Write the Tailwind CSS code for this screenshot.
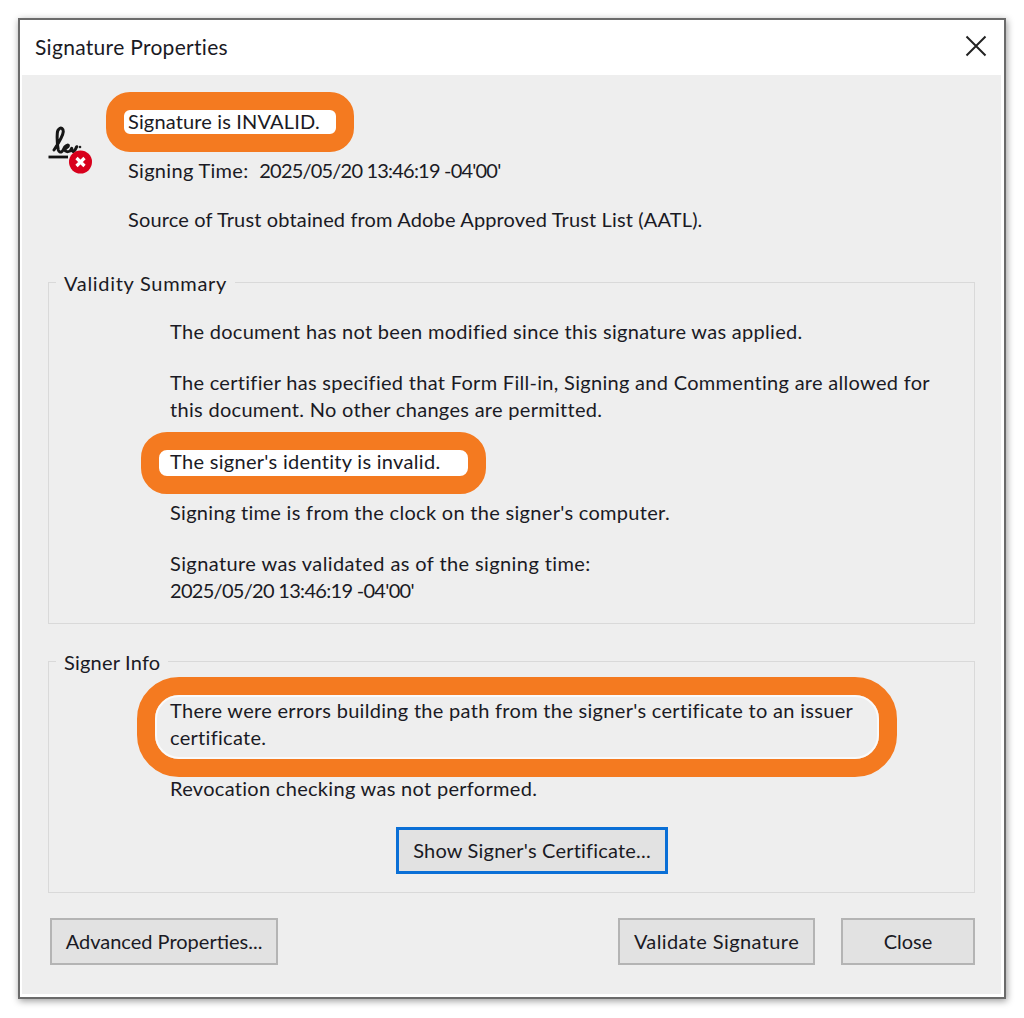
<!DOCTYPE html>
<html><head><meta charset="utf-8"><script src="https://cdn.jsdelivr.net/npm/@tailwindcss/browser@4"></script><title>Signature Properties</title></head>
<body class="bg-white w-[1024px] h-[1018px] overflow-hidden font-['Lato','Liberation_Sans',sans-serif] text-[20px] leading-[27px] tracking-[0.3px] text-[#1a1a24]">
<div class="relative ml-[18px] mt-[18px] w-[988px] h-[981px] border-2 border-[#6b6b6b] bg-white flex flex-col shadow-[1px_2px_7px_rgba(0,0,0,0.4)]">
  <div class="absolute left-[86px] top-[72px] w-[248px] h-[60px] border-[18px] border-[#f47a20] rounded-[24px] bg-white"></div>
  <div class="absolute left-[121px] top-[412px] w-[345px] h-[62px] border-[18px] border-[#f47a20] rounded-[26px] bg-white"></div>
  <div class="absolute left-[117px] top-[657px] w-[760px] h-[100px] border-[18px] border-[#f47a20] rounded-[42px]"></div>
  <div class="absolute left-[135px] top-[675px] w-[724px] h-[64px] border-2 border-white/70 rounded-[24px]"></div>
  <header class="relative h-[55px] flex items-center justify-between pl-[15px] pr-[17px] shrink-0">
    <span class="text-[21px] -mt-[2px]">Signature Properties</span>
    <svg class="-mt-[4px]" width="22" height="22" viewBox="0 0 22 22" fill="none" stroke="#222" stroke-width="2"><path d="M1.500 1.500 20.500 20.500M20.500 1.500 1.500 20.500"/></svg>
  </header>
  <main class="flex-1 flex flex-col ml-[2px] mr-[3px] mb-[3px] px-[26px] bg-[#eeeeee]">
    <section class="relative pl-[80px] pt-[33px] h-[207px] shrink-0">
      <svg class="absolute left-[0px] top-[51px]" width="46" height="50" viewBox="0 0 46 50" fill="none">
        <path d="M0.500 31H20" stroke="#111" stroke-width="2.800"/>
        <path d="M6 24C10 18 15 10 15.300 5.700C15.300 2.500 13 1.500 12 2.300C10 3.500 9.300 5 9.300 7.300C9 12 9.500 20 10.300 24C10.800 26 12.500 26.500 13.700 25.700C15 25 16 22 17 20.700C18.500 19 20.800 18.500 20.300 20C19.800 21.500 17 22 17 24C17.200 26 20 26 22 25C23 24 23.300 23 23.700 22.300C24 24 24.500 25.700 25.300 25.700C26.500 25.700 27.500 23 28.700 20.700" stroke="#161616" stroke-width="3" stroke-linecap="round" stroke-linejoin="round"/>
        <circle cx="32" cy="21" r="1.300" fill="#222"/>
        <circle cx="32.500" cy="36" r="11.500" fill="#d8001c"/>
        <path d="M28.500 32 36.500 40M36.500 32 28.500 40" stroke="#fff" stroke-width="3.200"/>
      </svg>
      <p class="tracking-[0.15px]">Signature is INVALID.</p>
      <p class="mt-[22px]">Signing Time:&nbsp;&nbsp;<span class="tracking-[-0.8px]">2025/05/20 13:46:19 -04'00'</span></p>
      <p class="mt-[22px] tracking-[0.145px]">Source of Trust obtained from Adobe Approved Trust List (AATL).</p>
    </section>
    <section class="relative h-[342px] border border-[#d9d9d9] pl-[121px] pr-[40px] pt-[35px] shrink-0">
      <h2 class="absolute left-[7px] top-[-13px] bg-[#eeeeee] px-[8px] tracking-[0.7px]">Validity Summary</h2>
      <p>The document has not been modified since this signature was applied.</p>
      <p class="mt-[24px]">The certifier has specified that Form Fill-in, Signing and Commenting are allowed for this document. No other changes are permitted.</p>
      <p class="mt-[25px]">The signer's identity is invalid.</p>
      <p class="mt-[24px]">Signing time is from the clock on the signer's computer.</p>
      <p class="mt-[24px] tracking-[0.4px]">Signature was validated as of the signing time:<br><span class="tracking-[-0.7px]">2025/05/20 13:46:19 -04'00'</span></p>
    </section>
    <section class="relative mt-[37px] h-[232px] border border-[#d9d9d9] pl-[121px] pr-[70px] pt-[35px] shrink-0">
      <h2 class="absolute left-[7px] top-[-13px] bg-[#eeeeee] px-[8px] tracking-[0.2px]">Signer Info</h2>
      <p>There were errors building the path from the signer's certificate to an issuer certificate.</p>
      <p class="mt-[24px]">Revocation checking was not performed.</p>
      <div class="flex justify-center mt-[25px] ml-[-121px] mr-[-70px]">
        <button class="w-[272px] h-[47px] ml-[41px] border-3 border-[#0a6fd6] bg-[#e2e2e2] tracking-[0.2px]">Show Signer's Certificate...</button>
      </div>
    </section>
    <footer class="flex justify-between mt-[25px] pl-[2px] pr-0">
      <button class="w-[228px] h-[47px] border-2 border-[#b4b4b4] bg-[#e2e2e2] tracking-normal">Advanced Properties...</button>
      <div class="flex gap-[26px]">
        <button class="w-[197px] h-[47px] border-2 border-[#b4b4b4] bg-[#e2e2e2] tracking-[0.4px]">Validate Signature</button>
        <button class="w-[134px] h-[47px] border-2 border-[#b4b4b4] bg-[#e2e2e2] tracking-normal">Close</button>
      </div>
    </footer>
  </main>
</div>
</body></html>
